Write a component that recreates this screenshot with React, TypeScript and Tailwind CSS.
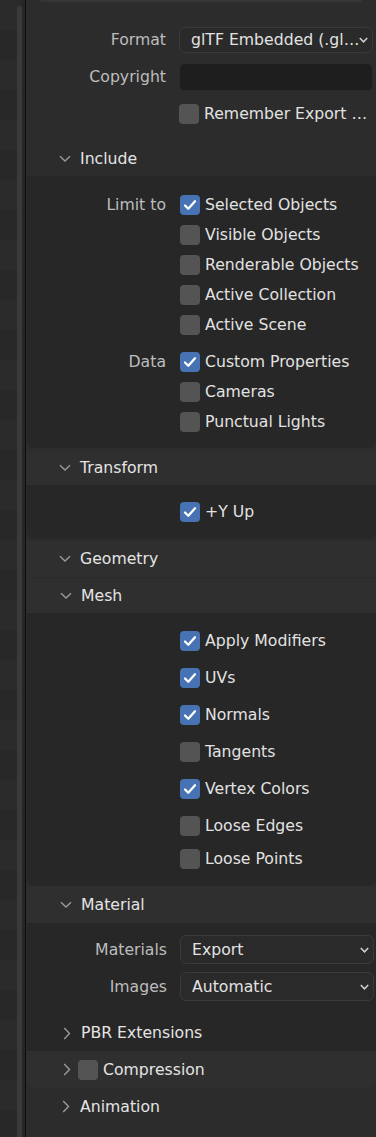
import React from 'react';

const font = { fontFamily: '"DejaVu Sans", "Liberation Sans", sans-serif' };

function Check() {
  return (
    <svg width="20" height="20" viewBox="0 0 20 20">
      <path d="M5 10.5 L8.3 13.8 L15 6.3" fill="none" stroke="#ffffff" strokeWidth="2.3" strokeLinecap="round" strokeLinejoin="round" />
    </svg>
  );
}

function Box({ checked }: { checked?: boolean }) {
  return (
    <div
      className={`flex h-[20px] w-[20px] shrink-0 items-center justify-center rounded-[4px] ${
        checked ? 'bg-[#4772b3]' : 'bg-[#545454]'
      }`}
    >
      {checked && <Check />}
    </div>
  );
}

function ChevronDown({ color = '#9a9a9a' }: { color?: string }) {
  return (
    <svg width="12" height="8" viewBox="0 0 12 8">
      <path d="M1 1.2 L6 6 L11 1.2" fill="none" stroke={color} strokeWidth="1.4" />
    </svg>
  );
}

function ChevronRight() {
  return (
    <svg width="8" height="13" viewBox="0 0 8 13">
      <path d="M1.2 1 L6.5 6.5 L1.2 12" fill="none" stroke="#9a9a9a" strokeWidth="1.4" />
    </svg>
  );
}

function Header({
  title,
  open = true,
  checkbox,
  h,
  bg,
  className = '',
}: {
  title: string;
  open?: boolean;
  checkbox?: boolean;
  h: string;
  bg: string;
  className?: string;
}) {
  return (
    <div className={`flex items-center ${h} ${bg} ${className}`}>
      <div className="flex w-[54px] shrink-0 justify-end pr-[8px]">
        {open ? (
          <div className="pr-[1px]">
            <ChevronDown />
          </div>
        ) : (
          <div className="pr-[2px]">
            <ChevronRight />
          </div>
        )}
      </div>
      {checkbox && (
        <div className="-ml-[3px] mr-[5px]">
          <Box />
        </div>
      )}
      <span className="text-[15.7px] text-[#e4e4e4]">{title}</span>
    </div>
  );
}

function CheckRow({ label, checked, side }: { label: string; checked?: boolean; side?: string }) {
  return (
    <div className="flex h-[30px] items-center">
      <div className="w-[140px] shrink-0 pr-[1px] text-right text-[15.7px] text-[#bdbdbd]">{side}</div>
      <div className="ml-[13px] flex items-center gap-[5px]">
        <Box checked={checked} />
        <span className="text-[15.7px] text-[#e2e2e2]">{label}</span>
      </div>
    </div>
  );
}

function Dropdown({ label, value, h = 'h-[26px]' }: { label: string; value: string; h?: string }) {
  return (
    <div className="flex items-center">
      <div className="w-[140px] shrink-0 text-right text-[15.7px] text-[#bdbdbd]">{label}</div>
      <div
        className={`ml-[13px] flex w-[194px] items-center justify-between rounded-[6px] border border-[#3a3a3a] bg-[#2a2a2a] pl-[11px] pr-[4px] ${h}`}
      >
        <span className="whitespace-nowrap text-[15.7px] text-[#e2e2e2]">{value}</span>
        <svg width="9" height="6" viewBox="0 0 9 6" className="shrink-0">
          <path d="M0.8 1 L4.5 4.8 L8.2 1" fill="none" stroke="#d0d0d0" strokeWidth="1.5" />
        </svg>
      </div>
    </div>
  );
}

export default function App() {
  const stripes = Array.from({ length: 40 });
  return (
    <div className="flex h-[1137px] w-[376px] overflow-hidden bg-[#2c2c2c]" style={font}>
      <div className="flex w-[17px] shrink-0 flex-col">
        {stripes.map((_, i) => (
          <div key={i} className={`h-[30px] shrink-0 ${i % 2 ? 'bg-[#282828]' : 'bg-[#2b2b2b]'}`} />
        ))}
      </div>
      <div className="flex w-[5px] shrink-0 flex-col bg-[#2a2a2a] pt-[6px]">
        <div className="flex-1 rounded-t-[3px] bg-[#3a3a3a]" />
      </div>
      <div className="w-[3px] shrink-0 bg-[#262626]" />
      <div className="w-px shrink-0 bg-[#0d0d0d]" />

      <div className="flex w-[350px] shrink-0 flex-col bg-[#2c2c2c]">
        <div className="mx-[14px] h-[2px] shrink-0 rounded-b-[2px] bg-[#363636]" />

        <div className="flex flex-col pt-[25px] pb-[15px]">
          <Dropdown label="Format" value="glTF Embedded (.gl…" />
          <div className="mt-[10px] flex items-center">
            <div className="w-[140px] shrink-0 text-right text-[15.7px] text-[#bdbdbd]">Copyright</div>
            <div className="ml-[13px] h-[28px] w-[194px] rounded-[6px] border border-[#2a2a2a] bg-[#1e1e1e]" />
          </div>
          <div className="mt-[10px] flex h-[26px] items-center">
            <div className="ml-[153px] flex items-center gap-[5px]">
              <Box />
              <span className="text-[15.7px] text-[#e2e2e2]">Remember Export …</span>
            </div>
          </div>
        </div>

        <Header title="Include" h="h-[34px]" bg="bg-[#2c2c2c]" />
        <div className="ml-px flex flex-col rounded-b-[8px] bg-[#272727] pt-[14px] pb-[11px]">
          <CheckRow side="Limit to" label="Selected Objects" checked />
          <CheckRow label="Visible Objects" />
          <CheckRow label="Renderable Objects" />
          <CheckRow label="Active Collection" />
          <CheckRow label="Active Scene" />
          <div className="h-[7px]" />
          <CheckRow side="Data" label="Custom Properties" checked />
          <CheckRow label="Cameras" />
          <CheckRow label="Punctual Lights" />
        </div>

        <div className="h-[3px]" />
        <Header title="Transform" h="h-[34px]" bg="bg-[#2f2f2f]" />
        <div className="ml-px flex flex-col rounded-b-[8px] bg-[#272727] pt-[12px] pb-[12px]">
          <CheckRow label="+Y Up" checked />
        </div>

        <div className="h-[2px]" />
        <Header title="Geometry" h="h-[36px]" bg="bg-[#2f2f2f]" />
        <Header title="Mesh" h="h-[36px]" bg="bg-[#2f2f2f]" className="ml-px border-t border-[#2a2a2a]" />
        <div className="ml-px flex flex-col rounded-b-[8px] bg-[#272727] pt-[13px] pb-[12px]">
          <CheckRow label="Apply Modifiers" checked />
          <div className="h-[7px]" />
          <CheckRow label="UVs" checked />
          <div className="h-[7px]" />
          <CheckRow label="Normals" checked />
          <div className="h-[7px]" />
          <CheckRow label="Tangents" />
          <div className="h-[7px]" />
          <CheckRow label="Vertex Colors" checked />
          <div className="h-[7px]" />
          <CheckRow label="Loose Edges" />
          <div className="h-[3px]" />
          <CheckRow label="Loose Points" />
        </div>

        <Header title="Material" h="h-[37px]" bg="bg-[#2f2f2f]" className="ml-px" />
        <div className="ml-px flex flex-col bg-[#272727] pt-[12px]">
          <Dropdown label="Materials" value="Export" h="h-[29px]" />
          <div className="h-[8px]" />
          <Dropdown label="Images" value="Automatic" h="h-[29px]" />
          <div className="h-[14px]" />
          <Header title="PBR Extensions" open={false} h="h-[36px]" bg="bg-[#272727]" />
        </div>
        <Header
          title="Compression"
          open={false}
          checkbox
          h="h-[37px]"
          bg="bg-[#2f2f2f]"
          className="ml-px rounded-b-[8px]"
        />
        <Header title="Animation" open={false} h="h-[37px]" bg="bg-[#2c2c2c]" />
        <div className="flex-1" />
      </div>
    </div>
  );
}
